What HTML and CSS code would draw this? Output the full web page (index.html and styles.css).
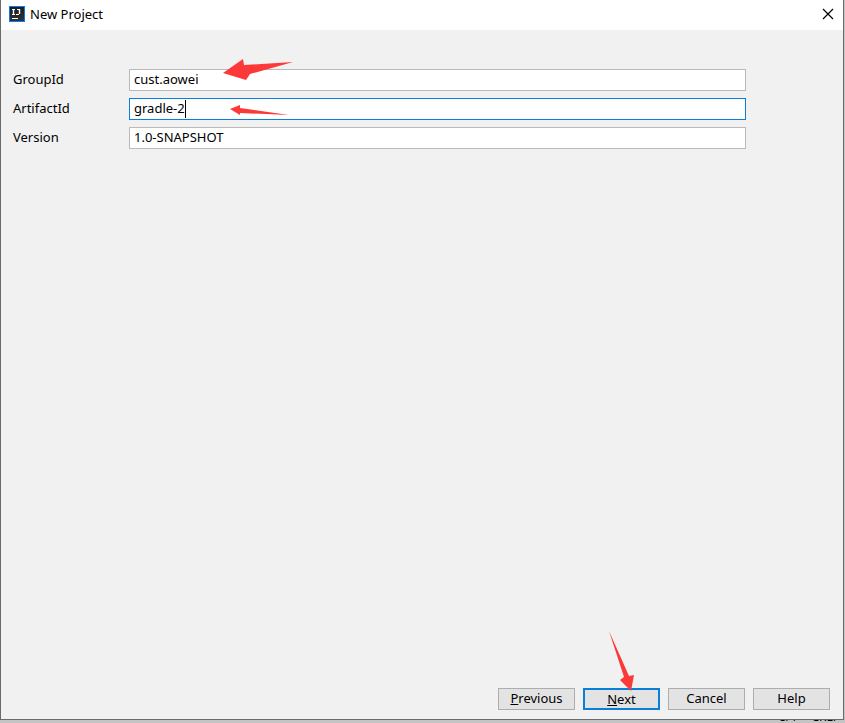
FILE: index.html
```html
<!DOCTYPE html>
<html lang="en">

<head>
    <meta charset="UTF-8">
    <meta name="viewport" content="width=device-width, initial-scale=1.0">
    <title>New Project</title>
    <link rel="stylesheet" href="styles.css">
</head>

<body>
    <div class="dialog" role="dialog" aria-labelledby="dialog-title">
        <header class="title-bar">
            <svg class="logo" width="16" height="16" viewBox="0 0 16 16" aria-hidden="true">
                <defs>
                    <linearGradient id="logo-fill" x1="0" y1="0" x2="0" y2="1">
                        <stop offset="0" stop-color="#1b1b1d" />
                        <stop offset="1" stop-color="#2f3436" />
                    </linearGradient>
                </defs>
                <rect x="0.5" y="0.5" width="15" height="15" fill="url(#logo-fill)" stroke="#0a7bf0" />
                <path d="M3 3.5h3M3 8.500h3M8 3.500h3M7 8.500h3M3 12.500h6" fill="none" stroke="#fff" />
                <path d="M4.500 3v6M10.500 3v5" fill="none" stroke="#fff" stroke-width="1.4" />
            </svg>
            <h1 id="dialog-title">New Project</h1>
            <button type="button" class="close" aria-label="Close">
                <svg width="12" height="12" viewBox="0 0 12 12" aria-hidden="true">
                    <path d="M1 1l10 10M11 1L1 11" stroke="#000" stroke-width="1.2" />
                </svg>
            </button>
        </header>
        <form class="content">
            <div class="fields">
                <label for="group-id">GroupId</label>
                <div class="field">
                    <input type="text" id="group-id" name="groupId" value="cust.aowei">
                    <svg class="arrow arrow-group" width="70" height="22" viewBox="0 0 70 22" aria-hidden="true">
                        <path d="M0 14L20 0l1 6 49-3-43 12-4 6z" />
                    </svg>
                </div>
                <label for="artifact-id">ArtifactId</label>
                <div class="field">
                    <div class="text-box">
                        <input type="text" id="artifact-id" name="artifactId" value="gradle-2">
                        <span class="caret"></span>
                    </div>
                    <svg class="arrow arrow-artifact" width="59" height="11" viewBox="0 0 59 11" aria-hidden="true">
                        <path d="M0 4l10-4v3l49 7-49-2v2z" />
                    </svg>
                </div>
                <label for="version">Version</label>
                <div class="field">
                    <input type="text" id="version" name="version" value="1.0-SNAPSHOT">
                </div>
            </div>
            <footer class="buttons">
                <button type="button"><u>P</u>revious</button>
                <div class="field">
                    <button type="submit" class="default"><u>N</u>ext</button>
                    <svg class="arrow arrow-next" width="26" height="61" viewBox="0 0 26 61" aria-hidden="true">
                        <path d="M0 0l20 45 5-1-3 16-11-11 4-3z" />
                    </svg>
                </div>
                <button type="button">Cancel</button>
                <button type="button">Help</button>
            </footer>
        </form>
    </div>
    <div class="status-bar">
        <span>8/1</span>
        <span>CRLF</span>
    </div>
</body>

</html>
```

FILE: styles.css
```css
* {
    box-sizing: border-box;
}

body {
    display: flex;
    flex-direction: column;
    height: 100vh;
    margin: 0;
    overflow: hidden;
    background-color: #c4c4c4;
    color: #000;
    font: 13px/20px "Noto Sans", sans-serif;
}

.dialog {
    flex: 1;
    display: flex;
    flex-direction: column;
    margin-right: 1px;
    border: 1px solid #6b6b6b;
    border-top: none;
    background-color: #f1f1f1;
}

.title-bar {
    display: flex;
    align-items: center;
    gap: 5px;
    height: 30px;
    padding: 0 9px 2px 8px;
    background-color: #fff;
}

.title-bar h1 {
    flex: 1;
    margin: 0;
    font-size: 13px;
    font-weight: normal;
}

.close {
    display: flex;
    padding: 0;
    border: none;
    background: none;
}

.content {
    flex: 1;
    display: flex;
    flex-direction: column;
    justify-content: space-between;
    padding: 39px 13px 9px 12px;
}

.fields {
    display: grid;
    grid-template-columns: 109px 1fr;
    gap: 7px;
    margin-right: 84px;
}

.field {
    position: relative;
}

.fields input {
    display: block;
    width: 100%;
    height: 22px;
    padding: 0 4px 2px;
    border: 1px solid #bababa;
    border-radius: 0;
    background-color: #fff;
    color: #000;
    font: inherit;
    outline: none;
}

.text-box {
    display: flex;
    align-items: center;
    height: 22px;
    padding: 0 4px;
    border: 1px solid #0a7fd9;
    background-color: #fff;
}

.fields .text-box input {
    width: auto;
    height: 20px;
    padding: 0 0 2px;
    border: none;
    field-sizing: content;
}

.caret {
    width: 1px;
    height: 18px;
    background-color: #000;
}

.arrow {
    position: absolute;
    fill: #fd3838;
    pointer-events: none;
}

.arrow-group {
    top: -10px;
    left: 94px;
}

.arrow-artifact {
    top: 7px;
    left: 101px;
}

.arrow-next {
    top: -57px;
    left: 26px;
}

.buttons {
    display: flex;
    justify-content: flex-end;
    gap: 8px;
}

.buttons button {
    width: 77px;
    height: 22px;
    padding: 0 0 2px;
    border: 1px solid #adadad;
    background-color: #e3e3e3;
    color: #000;
    font: inherit;
    line-height: 18px;
}

.buttons .default {
    display: block;
    border: 2px solid #0a7fd9;
}

.status-bar {
    display: flex;
    align-items: flex-end;
    justify-content: flex-end;
    gap: 14px;
    height: 3px;
    padding-right: 6px;
    overflow: hidden;
    font-size: 12px;
    line-height: 12px;
}
```
